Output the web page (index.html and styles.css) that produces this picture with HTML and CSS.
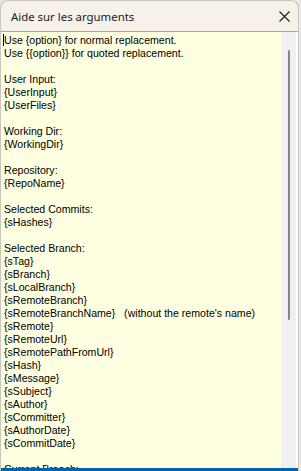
FILE: index.html
```html
<!DOCTYPE html>
<html>
<head>
<meta charset="utf-8">
<link rel="stylesheet" href="styles.css">
</head>
<body>
<div class="window">
  <div class="titlebar">
    <span class="title">Aide sur les arguments</span>
    <svg class="close" width="11" height="11" viewBox="0 0 11 11"><path d="M0.5 0.5 L10.5 10.5 M10.5 0.5 L0.5 10.5" stroke="#1a1a1a" stroke-width="1.1" fill="none"/></svg>
  </div>
  <div class="body">
    <div class="text"><span class="caret"></span>Use {option} for normal replacement.
Use {{option}} for quoted replacement.

User Input:
{UserInput}
{UserFiles}

Working Dir:
{WorkingDir}

Repository:
{RepoName}

Selected Commits:
{sHashes}

Selected Branch:
{sTag}
{sBranch}
{sLocalBranch}
{sRemoteBranch}
{sRemoteBranchName}   (without the remote's name)
{sRemote}
{sRemoteUrl}
{sRemotePathFromUrl}
{sHash}
{sMessage}
{sSubject}
{sAuthor}
{sCommitter}
{sAuthorDate}
{sCommitDate}

Current Branch:</div>
    <div class="scroll"><div class="thumb"></div></div>
  </div>
  <div class="focusline"></div>
</div>
</body>
</html>
```
FILE: styles.css
```css
html, body {
  margin: 0;
  padding: 0;
  background: #e9e9e9;
}
.window {
  width: 299px;
  height: 471px;
  box-sizing: border-box;
  border: 1px solid #c9c6c2;
  border-bottom: none;
  border-radius: 8px 8px 0 0;
  background: #f8f1ea;
  display: flex;
  flex-direction: column;
  overflow: hidden;
}
.titlebar {
  height: 30px;
  flex: none;
  display: flex;
  align-items: center;
  justify-content: space-between;
  padding: 0 8px 0 10px;
}
.title {
  font-family: "Noto Sans", "Open Sans", sans-serif;
  font-size: 11.4px;
  color: #1a1a1a;
  padding-top: 1px;
}
.close {
  margin-top: 1px;
}
.body {
  flex: 1;
  min-height: 0;
  display: flex;
  border-top: 1px solid #a8a8a8;
  background: #ffffff;
}
.text {
  flex: 1;
  background: #ffffe1;
  font-family: "Liberation Sans", Arial, sans-serif;
  font-size: 10.6px;
  line-height: 13px;
  color: #000;
  white-space: pre;
  padding: 2px 0 0 3px;
  overflow: hidden;
}
.caret {
  display: inline-block;
  width: 1px;
  height: 12px;
  background: #000;
  vertical-align: -2px;
  margin-left: -1px;
}
.scroll {
  width: 15px;
  flex: none;
  background: #f0f0f0;
  margin-right: 2px;
  position: relative;
}
.thumb {
  position: absolute;
  left: 7px;
  top: 18px;
  width: 2px;
  height: 270px;
  background: #858585;
  border-radius: 1px;
}
.focusline {
  height: 3px;
  flex: none;
  background: #0063b1;
}
```
